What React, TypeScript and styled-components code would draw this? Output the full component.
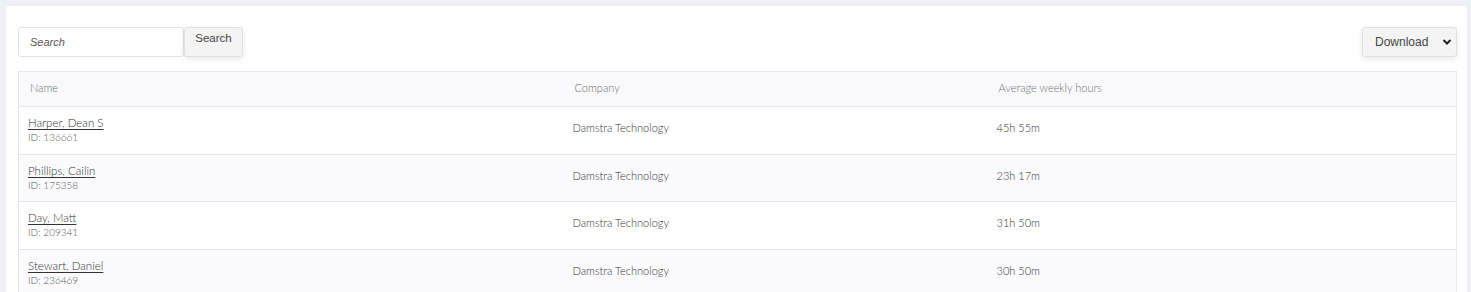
import React from "react";
import styled, { createGlobalStyle } from "styled-components";

const GlobalStyle = createGlobalStyle`
  html, body {
    margin: 0;
    padding: 0;
    background: #eef0f5;
  }
  body {
    font-family: "Lato", "Open Sans", sans-serif;
  }
`;

interface Employee {
  name: string;
  id: string;
  company: string;
  hours: string;
}

const employees: Employee[] = [
  { name: "Harper, Dean S", id: "136661", company: "Damstra Technology", hours: "45h 55m" },
  { name: "Phillips, Cailin", id: "175358", company: "Damstra Technology", hours: "23h 17m" },
  { name: "Day, Matt", id: "209341", company: "Damstra Technology", hours: "31h 50m" },
  { name: "Stewart, Daniel", id: "236469", company: "Damstra Technology", hours: "30h 50m" },
];

const Page = styled.div`
  padding: 6px 4px 0 6px;
  height: 292px;
  box-sizing: border-box;
  overflow: hidden;
`;

const Card = styled.div`
  background: #fff;
  border-radius: 3px;
  padding: 21px 10px 20px 12px;
  box-shadow: 0 0 1px rgba(0, 0, 0, 0.06);
`;

const Toolbar = styled.div`
  display: flex;
  justify-content: space-between;
  align-items: flex-start;
  margin-bottom: 14px;
`;

const SearchGroup = styled.form`
  display: flex;
  margin: 0;
`;

const SearchInput = styled.input`
  width: 166px;
  height: 30px;
  box-sizing: border-box;
  border: 1px solid #e2e2e4;
  border-radius: 3px;
  padding: 0 11px;
  font-family: "Liberation Sans", Arial, sans-serif;
  font-size: 11px;
  color: #333;
  outline: none;

  &::placeholder {
    font-style: italic;
    color: #555;
  }
`;

const Button = styled.button`
  height: 30px;
  box-sizing: border-box;
  background: #f4f4f4;
  border: 1px solid #e0e0e2;
  border-radius: 3px;
  box-shadow: 0 2px 6px rgba(0, 0, 0, 0.09);
  font-family: "Liberation Sans", Arial, sans-serif;
  font-size: 11.5px;
  color: #444;
  cursor: pointer;
`;

const SearchButton = styled(Button)`
  width: 59px;
  padding: 0 0 8px;
`;

const DownloadButton = styled(Button)`
  width: 95px;
  display: flex;
  align-items: center;
  justify-content: space-between;
  padding: 0 4px 0 12px;
  font-size: 12px;
`;

const Table = styled.table`
  width: 100%;
  border-collapse: collapse;
  border: 1px solid #e6e6ea;
  table-layout: fixed;
`;

const HeadCell = styled.th<{ $width?: number; $first?: boolean }>`
  box-sizing: border-box;
  width: ${(p) => (p.$width ? `${p.$width}px` : "auto")};
  height: 35px;
  background: #f9f9fb;
  text-align: left;
  font-weight: 300;
  font-size: 11px;
  color: #6f6f6f;
  padding: 0 0 4px ${(p) => (p.$first ? 11 : 12)}px;
  border-bottom: 1px solid #e6e6ea;
`;

const Row = styled.tr<{ $alt: boolean }>`
  background: ${(p) => (p.$alt ? "#fbfbfd" : "#fff")};
  border-bottom: 1px solid #e6e6ea;
`;

const Cell = styled.td<{ $first?: boolean }>`
  box-sizing: border-box;
  height: 47.5px;
  padding: 0 0 ${(p) => (p.$first ? 0 : 5)}px ${(p) => (p.$first ? 9 : 10)}px;
  font-size: 11px;
  font-weight: 300;
  color: #333;
`;

const NameLink = styled.a`
  display: block;
  color: #333;
  font-size: 11.5px;
  text-decoration: underline;
  text-underline-offset: 2px;
  line-height: 15px;
`;

const IdText = styled.div`
  font-size: 10px;
  color: #555;
  line-height: 15px;
`;

const Chevron = () => (
  <svg width="10" height="8" viewBox="0 0 10 8">
    <path d="M1.5 2 L5 5.5 L8.5 2" fill="none" stroke="#222" strokeWidth="2" />
  </svg>
);

export default function App() {
  return (
    <Page>
      <GlobalStyle />
      <Card>
        <Toolbar>
          <SearchGroup onSubmit={(e) => e.preventDefault()}>
            <SearchInput placeholder="Search" />
            <SearchButton type="submit">Search</SearchButton>
          </SearchGroup>
          <DownloadButton type="button">
            Download
            <Chevron />
          </DownloadButton>
        </Toolbar>
        <Table>
          <thead>
            <tr>
              <HeadCell $width={544} $first>
                Name
              </HeadCell>
              <HeadCell $width={424}>Company</HeadCell>
              <HeadCell>Average weekly hours</HeadCell>
            </tr>
          </thead>
          <tbody>
            {employees.map((emp, i) => (
              <Row key={emp.id} $alt={i % 2 === 1}>
                <Cell $first>
                  <NameLink href="#">{emp.name}</NameLink>
                  <IdText>ID: {emp.id}</IdText>
                </Cell>
                <Cell>{emp.company}</Cell>
                <Cell>{emp.hours}</Cell>
              </Row>
            ))}
          </tbody>
        </Table>
      </Card>
    </Page>
  );
}
